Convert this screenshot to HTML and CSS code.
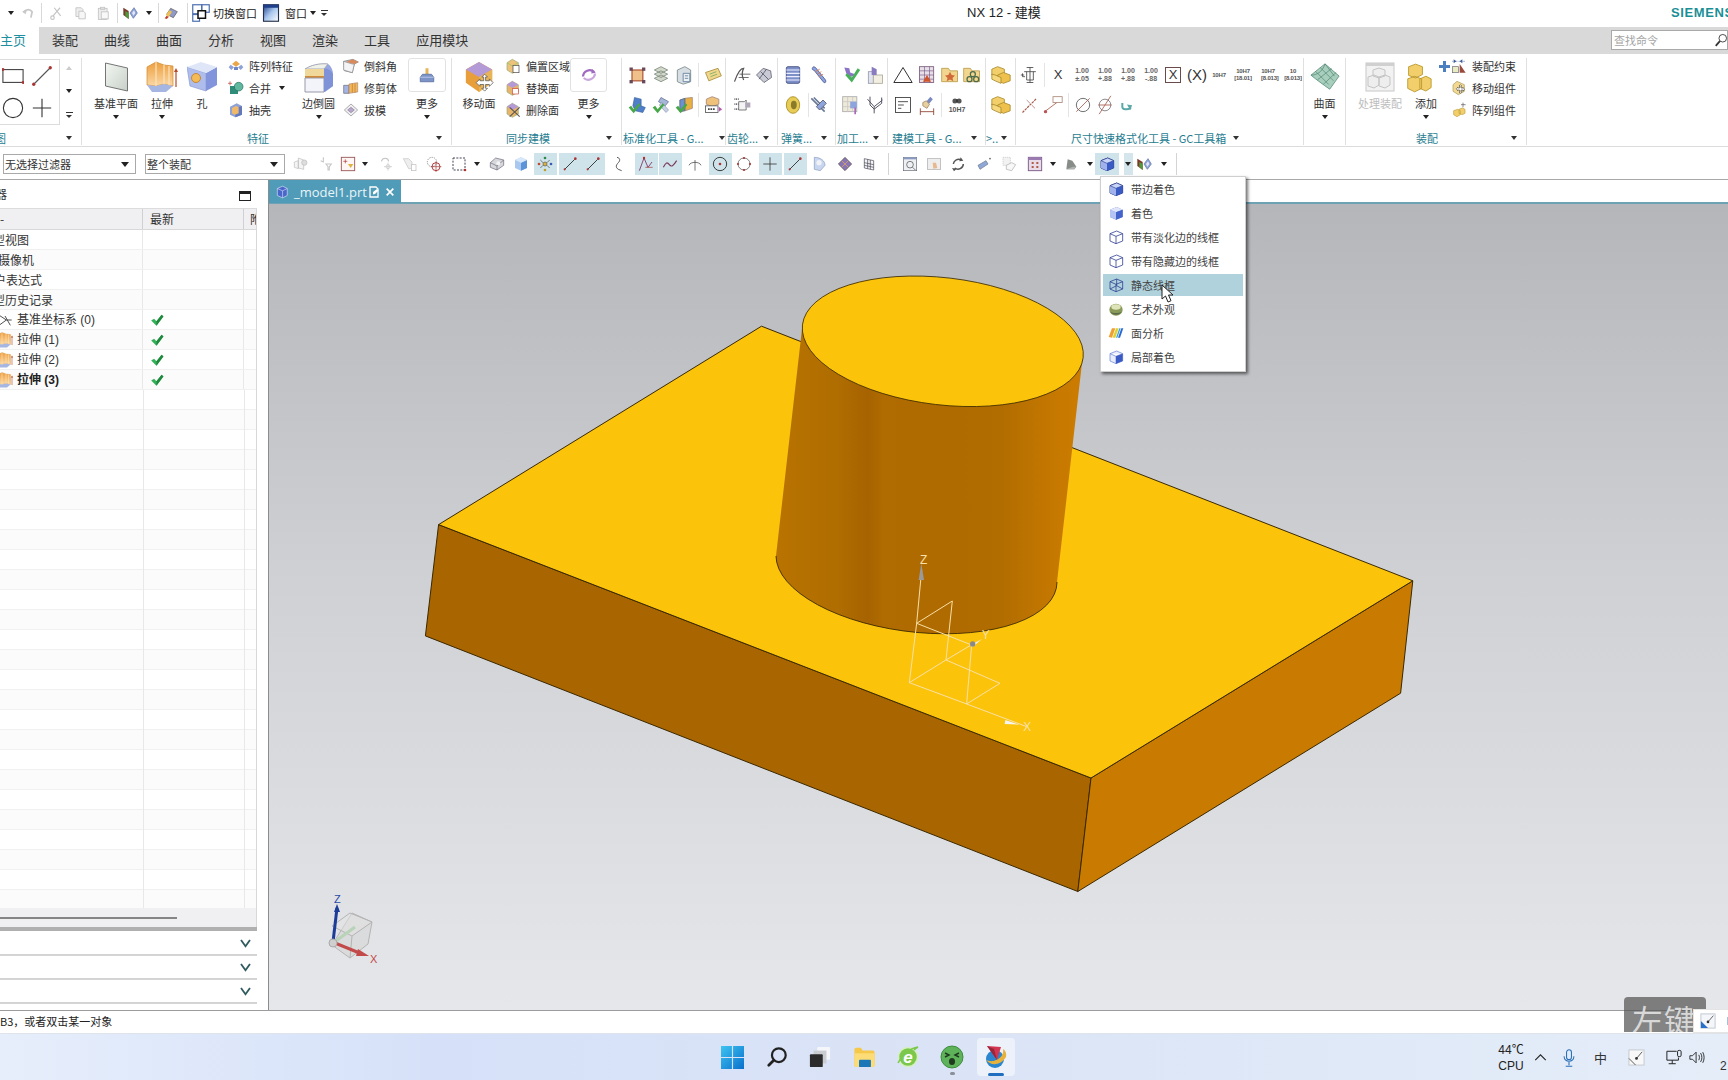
FILE: index.html
```html
<!DOCTYPE html>
<html lang="zh">
<head>
<meta charset="utf-8">
<title>NX 12 - 建模</title>
<link rel="stylesheet" href="styles.css">
</head>
<body>
<svg class="defs" width="0" height="0">
<defs>
<linearGradient id="gPlane" x1="0" y1="0" x2="1" y2="1"><stop offset="0" stop-color="#f4f7f3"/><stop offset="1" stop-color="#c6d0c8"/></linearGradient>
<linearGradient id="gExt" x1="0" y1="0" x2="0" y2="1"><stop offset="0" stop-color="#ed9e3e"/><stop offset="1" stop-color="#fbd8a4"/></linearGradient>
<linearGradient id="gWin" x1="0" y1="0" x2="1" y2="1"><stop offset="0" stop-color="#1f3f8a"/><stop offset=".5" stop-color="#a9c7ee"/><stop offset="1" stop-color="#ffffff"/></linearGradient>
<linearGradient id="gLogo" x1="0" y1="0" x2="1" y2="1"><stop offset="0" stop-color="#3cc4f2"/><stop offset="1" stop-color="#0b6fcb"/></linearGradient>
<symbol id="undo" viewBox="0 0 24 24"><path d="M5 12c1-6 10-8 14-2l-2 10" fill="none" stroke="#c8c8c8" stroke-width="3"/><path d="M2 9l6 5 2-7z" fill="#c8c8c8"/></symbol>
<symbol id="cut" viewBox="0 0 24 24"><path d="M19 3L7 17M9 3l11 14" stroke="#c4c4c4" stroke-width="2" fill="none"/><circle cx="6" cy="20" r="3" fill="none" stroke="#c4c4c4" stroke-width="2"/></symbol>
<symbol id="copy" viewBox="0 0 24 24"><path d="M5 3h9l3 3v12H5z" fill="#eee" stroke="#c4c4c4" stroke-width="1.5"/><path d="M10 9h8l3 3v10H10z" fill="#f6f6f6" stroke="#c4c4c4" stroke-width="1.5"/></symbol>
<symbol id="paste" viewBox="0 0 24 24"><rect x="4" y="4" width="15" height="19" fill="#eee" stroke="#c4c4c4" stroke-width="1.5"/><rect x="8" y="2" width="7" height="4" fill="#ddd" stroke="#bbb"/><rect x="9" y="10" width="12" height="12" fill="#f8f8f8" stroke="#c4c4c4" stroke-width="1.5"/></symbol>
<symbol id="view" viewBox="0 0 24 24"><path d="M2 4l8 5v12l-8-6z" fill="#7b3b2a"/><path d="M5 9l5 3v9l-5-5z" fill="#4f9b3c"/><path d="M12 12l6-8 5 8-6 8z" fill="#8ea4d8" stroke="#5a6ea8"/><path d="M15 12l3-4 2 4-3 4z" fill="#e4e8f6"/></symbol>
<symbol id="brush" viewBox="0 0 24 24"><path d="M10 5l10 5-6 9-10-5z" fill="#8f9ac8" stroke="#555"/><path d="M3 15l5-7 4 2-5 8z" fill="#f0c050"/><path d="M1 20l3-4 3 2-3 3z" fill="#c03a2a"/></symbol>
<symbol id="sw" viewBox="0 0 24 24"><rect x="1" y="1" width="12" height="12" fill="none" stroke="#4d6fb0" stroke-width="1.6"/><rect x="13" y="1" width="10" height="10" fill="none" stroke="#4d6fb0" stroke-width="1.6"/><rect x="1" y="14" width="9" height="9" fill="none" stroke="#4d6fb0" stroke-width="1.6"/><rect x="8" y="9" width="10" height="10" fill="#fff" stroke="#111" stroke-width="2"/></symbol>
<symbol id="win" viewBox="0 0 24 24"><rect x="2" y="1" width="20" height="22" fill="url(#gWin)" stroke="#24304a" stroke-width="1.5"/><rect x="2" y="1" width="20" height="4" fill="#1f3f8a"/></symbol>
<symbol id="rect" viewBox="0 0 24 24"><rect x="1" y="5" width="22" height="14" fill="none" stroke="#444" stroke-width="1.2"/><circle cx="1" cy="5" r="1.6" fill="#a33"/><circle cx="23" cy="19" r="1.6" fill="#a33"/></symbol>
<symbol id="line" viewBox="0 0 24 24"><path d="M3 21L21 3" stroke="#555" stroke-width="1.2"/><circle cx="3" cy="21" r="1.8" fill="#a33"/><circle cx="21" cy="3" r="1.8" fill="#a33"/></symbol>
<symbol id="circ" viewBox="0 0 24 24"><circle cx="12" cy="12" r="10.5" fill="none" stroke="#333" stroke-width="1.2"/></symbol>
<symbol id="plus" viewBox="0 0 24 24"><path d="M12 2v20M2 12h20" stroke="#333" stroke-width="1.2"/></symbol>
<symbol id="plane" viewBox="0 0 24 30"><path d="M1 1l22 5v23L1 24z" fill="url(#gPlane)" stroke="#666" stroke-width=".9"/></symbol>
<symbol id="ext" viewBox="0 0 32 32"><path d="M1 6l9-5 8 3 9 1v20l-9-2-8 2-9-1z" fill="url(#gExt)" stroke="#cf8a30" stroke-width=".7"/><path d="M10 1v24M18 4v20M23 5v20" stroke="#fbe3bd" stroke-width="1.2"/><path d="M1 24l9 1 8-2 9 2-7 6H6z" fill="#a6b6e2"/><path d="M30 26V9" stroke="#b34a2a" stroke-width="1.2"/><path d="M28 11l2-4 2 4z" fill="#b34a2a"/></symbol>
<symbol id="hole" viewBox="0 0 30 30"><path d="M0 5l19 6v18L3 24z" fill="#aebdeb" stroke="#8a9cd4" stroke-width=".7"/><path d="M19 11l11-6v18l-11 6z" fill="#8294dc"/><path d="M0 5l14-5 16 5-11 6z" fill="#dfe6f8"/><circle cx="9" cy="16" r="4.500" fill="#f2bb55" stroke="#c3791f" stroke-width=".8"/></symbol>
<symbol id="round" viewBox="0 0 30 32"><path d="M1 8c6-4 15-6 23-5 3 2 5 6 5 10v12l-8 6H1z" fill="#95a6e0"/><path d="M1 8c6-4 15-6 23-5l-4 5H1z" fill="#eef2e8" stroke="#aab"/><path d="M1 8h19v7H1z" fill="#f0d79a"/><path d="M1 15h19v2H1z" fill="#d08a35"/><path d="M1 17h19v14H1z" fill="#f2f4fa" stroke="#99a"/><path d="M20 8c3-1 7 1 9 5v12l-9 6z" fill="#7f92d8"/></symbol>
<symbol id="more" viewBox="0 0 24 24"><rect x="10" y="3" width="4" height="8" fill="#e8b45a"/><path d="M6 11h12l3 4v6H3v-6z" fill="#7c94c8" stroke="#54689a"/><path d="M3 15h18" stroke="#c9d5ee"/></symbol>
<symbol id="more2" viewBox="0 0 24 24"><path d="M4 14a9 9 0 0 1 15-6" fill="none" stroke="#a06ac0" stroke-width="3"/><path d="M20 10a9 9 0 0 1-15 6" fill="none" stroke="#c9a6dc" stroke-width="3"/><path d="M16 4l5 5-6 1z" fill="#a06ac0"/></symbol>
<symbol id="pat" viewBox="0 0 24 24"><path d="M12 4l6 5-6 4-6-4z" fill="#e9a64a"/><path d="M4 10l5 4-4 4-4-4zM20 10l-5 4 4 4 4-4z" fill="#8ea2d6"/><path d="M9 14l3-1 3 1v4H9z" fill="#6f86c6"/></symbol>
<symbol id="unite" viewBox="0 0 24 24"><rect x="3" y="9" width="12" height="12" fill="#2f8c78"/><circle cx="16" cy="10" r="6.5" fill="#61b89f" stroke="#1f6c5a"/><path d="M3 2v6M0 5h6" stroke="#c03a2a"/></symbol>
<symbol id="shell" viewBox="0 0 24 24"><path d="M3 7l10-5 8 4v13l-10 4-8-4z" fill="#8ea2d6"/><path d="M11 9l10-3v13l-10 4z" fill="#6478bc"/><path d="M6 9l6-3 4 2v9l-6 2-4-2z" fill="#f0b96a"/></symbol>
<symbol id="cham" viewBox="0 0 24 24"><path d="M1 5l14-3 8 4-6 3-3 13-12-3z" fill="#c8c8d8" stroke="#777"/><path d="M1 5l13 4 3 0-3 13L1 18z" fill="#f4f4f6" stroke="#888"/><path d="M14 2l9 4-6 3-12-3z" fill="#d98a5a"/></symbol>
<symbol id="trim" viewBox="0 0 24 24"><path d="M1 8h8v12H1z" fill="#a5b4e2" stroke="#667"/><path d="M9 6l13-2v14L9 20z" fill="#f2b75a" stroke="#a87"/><path d="M14 5v14M18 5v14" stroke="#c07a30"/></symbol>
<symbol id="draft" viewBox="0 0 24 24"><path d="M12 3l10 9-10 9-10-9z" fill="#f0eef4" stroke="#888"/><path d="M12 8l5 4-5 4-5-4z" fill="#b9a7d0" stroke="#888"/></symbol>
<symbol id="move" viewBox="0 0 32 34"><path d="M16 1l14 8v14l-14 10L2 23V9z" fill="#e89e3a"/><path d="M16 1l14 8-14 8L2 9z" fill="#b59ad8"/><path d="M16 17l14-8v14l-14 10z" fill="#e9b458"/><path d="M22 14l3 3h-2v4h4v-2l4 4-4 4v-2h-4v4h2l-3 3-3-3h2v-4h-4v2l-4-4 4-4v2h4v-4h-2z" fill="#fff" stroke="#555" stroke-width=".8"/></symbol>
<symbol id="offs" viewBox="0 0 24 24"><path d="M11 2l9 5v11l-9 5-8-5V7z" fill="#eec27a" stroke="#9a7"/><path d="M3 7l8 5 9-5" fill="none" stroke="#8c6"/><rect x="12" y="11" width="9" height="11" fill="#fff" stroke="#444"/></symbol>
<symbol id="repl" viewBox="0 0 24 24"><path d="M11 2l9 5v11l-9 5-8-5V7z" fill="#e7b56a" stroke="#9a7"/><path d="M3 7l8-5 9 5-9 5z" fill="#b59ad8"/><rect x="11" y="13" width="9" height="8" fill="#fff" stroke="#c43"/></symbol>
<symbol id="del" viewBox="0 0 24 24"><path d="M11 2l9 5v11l-9 5-8-5V7z" fill="#e7b56a" stroke="#9a7"/><path d="M3 7l8-5 9 5-9 5z" fill="#b59ad8"/><path d="M7 8l15 14M22 8L7 22" stroke="#555" stroke-width="1.6"/></symbol>
<symbol id="a1" viewBox="0 0 24 24"><rect x="6" y="6" width="13" height="13" fill="#f0c08a" stroke="#b05a3a" stroke-width="1.5"/><rect x="3" y="3" width="4" height="4" fill="#6a4a5a"/><rect x="18" y="3" width="4" height="4" fill="#6a4a5a"/><rect x="3" y="18" width="4" height="4" fill="#6a4a5a"/><rect x="18" y="18" width="4" height="4" fill="#6a4a5a"/></symbol>
<symbol id="a2" viewBox="0 0 24 24"><path d="M12 2l8 4-8 4-8-4zM12 7l8 4-8 4-8-4zM12 12l8 4-8 4-8-4z" fill="#d4d8cc" stroke="#7a8a7a"/></symbol>
<symbol id="a3" viewBox="0 0 24 24"><path d="M4 6l9-4 7 4v14l-9 3-7-3z" fill="#d8dfe4" stroke="#788"/><path d="M11 10h8v10h-8z" fill="#eef2f4" stroke="#5a7a9a"/><path d="M13 13h4M13 16h4" stroke="#5a7a9a"/></symbol>
<symbol id="a4" viewBox="0 0 24 24"><path d="M3 9l15-5 4 9-15 6z" fill="#f0d78a" stroke="#a88a3a"/><path d="M8 11l8-3M9 14l8-3" stroke="#7a6"/></symbol>
<symbol id="b1" viewBox="0 0 24 24"><path d="M9 3l8 2v8l5 2-3 6-9-2-3-6z" fill="#4f7fc8" stroke="#2f5a9a" stroke-width=".7"/><path d="M2 15l3-2 3 4 6-7 2 2-8 10z" fill="#48a848"/></symbol>
<symbol id="b2" viewBox="0 0 24 24"><path d="M12 3l9 5-4 5-8-5z" fill="#a6b6d8" stroke="#6a7a9a"/><path d="M13 9l8 9-3 3-8-9z" fill="#c8d0e4" stroke="#6a7a9a" stroke-width=".6"/><path d="M2 15l3-2 3 4 6-7 2 2-8 10z" fill="#48a848"/></symbol>
<symbol id="b3" viewBox="0 0 24 24"><path d="M13 4l9-1v13l-9 3z" fill="#e7b040" stroke="#a87"/><path d="M7 6l6-2v15l-6 1z" fill="#6f90d0" stroke="#567"/><path d="M2 15l3-2 3 4 6-7 2 2-8 10z" fill="#48a848"/></symbol>
<symbol id="b4" viewBox="0 0 24 24"><path d="M4 5l7-3 8 3v6l-8 3-7-3z" fill="#eec27a" stroke="#a87"/><rect x="3" y="13" width="15" height="8" fill="#fff" stroke="#555"/><path d="M6 17h9" stroke="#444" stroke-dasharray="2 1" stroke-width="2"/><path d="M19 14l4 3-4 3z" fill="#b05ab0"/></symbol>
<symbol id="g1" viewBox="0 0 24 24"><path d="M3 20c4-12 8-16 11-16-2 4-2 10 0 14" fill="none" stroke="#555" stroke-width="1.5"/><path d="M9 11h13M8 15h12" stroke="#555"/></symbol>
<symbol id="g2" viewBox="0 0 24 24"><path d="M3 12l8-8 9 3 1 8-9 6z" fill="#c8cad4" stroke="#667"/><path d="M8 8l9 9M15 5L6 17" stroke="#556"/></symbol>
<symbol id="g3" viewBox="0 0 24 24"><path d="M3 5h5M3 11h5M3 17h5" stroke="#555" stroke-dasharray="1 1" stroke-width="2"/><path d="M8 8h7l2-2v12h-9z" fill="#f4f4f4" stroke="#666"/><rect x="16" y="9" width="6" height="6" fill="#b0a8b8"/></symbol>
<symbol id="sp1" viewBox="0 0 24 24"><rect x="4" y="2" width="16" height="20" rx="2" fill="#7d8fc8" stroke="#3c4a7a"/><path d="M4 6h16M4 10h16M4 14h16M4 18h16" stroke="#eef" stroke-width="1.4"/></symbol>
<symbol id="sp2" viewBox="0 0 24 24"><path d="M7 2c-3 1-2 5 0 4l12 15c2 1 3-1 2-3L9 3z" fill="#8ea4dc" stroke="#4a5a98"/><path d="M9 8l5-3M11 11l5-3M13 14l5-3" stroke="#d5764a"/></symbol>
<symbol id="sp3" viewBox="0 0 24 24"><ellipse cx="12" cy="12" rx="8" ry="10" fill="#e7cc55" stroke="#a88a1a"/><ellipse cx="13" cy="12" rx="3.5" ry="5" fill="#8a7a2a"/></symbol>
<symbol id="sp4" viewBox="0 0 24 24"><path d="M4 4l16 16M7 3l13 13" stroke="#6a7a98" stroke-width="2"/><path d="M10 14l8-8 4 4-8 8z" fill="#8ea4dc" stroke="#556"/></symbol>
<symbol id="m1" viewBox="0 0 24 24"><path d="M4 3l6 1 1 5 6 2-4 3-6-2z" fill="#8b74c8"/><path d="M5 12l3-2 5 5L20 4l3 2-10 15z" fill="#48b058"/></symbol>
<symbol id="m2" viewBox="0 0 24 24"><rect x="4" y="8" width="6" height="14" fill="#e0e4f0" stroke="#99a"/><rect x="10" y="12" width="11" height="10" fill="#f2eee2" stroke="#aa9"/><path d="M8 2l6 3v7H8z" fill="#8a7ac0"/></symbol>
<symbol id="m3" viewBox="0 0 24 24"><rect x="2" y="2" width="17" height="18" fill="#eee9d8" stroke="#aaa"/><path d="M2 8h17M2 14h17M8 2v18M14 2v18" stroke="#c8c8c8"/><rect x="11" y="8" width="8" height="8" fill="#8ea4dc"/><path d="M17 15v8" stroke="#a86ab8" stroke-width="2"/></symbol>
<symbol id="m4" viewBox="0 0 24 24"><path d="M3 5l8 9 0 8M11 14l10-8M6 2v10l5 5 9-7V3" fill="none" stroke="#556" stroke-width="1.2"/></symbol>
<symbol id="t1" viewBox="0 0 24 24"><path d="M12 3l11 18H1z" fill="none" stroke="#333" stroke-width="1.2"/></symbol>
<symbol id="t2" viewBox="0 0 24 24"><rect x="3" y="2" width="17" height="19" fill="#e8e0e8" stroke="#7a5a7a"/><path d="M3 7h17M3 12h17M3 17h17M9 2v19M15 2v19" stroke="#7a5a8a" stroke-width=".8"/><path d="M12 12l5 8H7z" fill="#d0552a"/></symbol>
<symbol id="t3" viewBox="0 0 24 24"><path d="M2 4h8l2 3h9v13H2z" fill="#f2d690" stroke="#b89a4a"/><path d="M12 8l2 4 4 .5-3 3 1 4-4-2-4 2 1-4-3-3 4-.5z" fill="#d06a3a"/></symbol>
<symbol id="t4" viewBox="0 0 24 24"><path d="M2 4h8l2 3h9v13H2z" fill="#f2d690" stroke="#b89a4a"/><circle cx="13" cy="11" r="3" fill="none" stroke="#4a6a4a" stroke-width="1.5"/><circle cx="9" cy="17" r="3" fill="none" stroke="#4a6a4a" stroke-width="1.5"/><circle cx="17" cy="17" r="3" fill="none" stroke="#4a6a4a" stroke-width="1.5"/></symbol>
<symbol id="t5" viewBox="0 0 24 24"><rect x="3" y="3" width="18" height="18" fill="none" stroke="#333"/><path d="M6 8h12M6 12h7M6 16h4" stroke="#333"/></symbol>
<symbol id="t6" viewBox="0 0 24 24"><path d="M4 20h16M4 16v8M20 16v8" stroke="#8a3a2a"/><path d="M16 2l3 3-5 6-3-3z" fill="#7a8ac0"/><path d="M7 9l4-2 4 4-3 5-5-3z" fill="#e6d0a0" stroke="#a86"/></symbol>
<symbol id="t7" viewBox="0 0 24 24"><circle cx="7" cy="12" r="6" fill="#555"/><circle cx="17" cy="12" r="6" fill="#555"/><rect x="10" y="8" width="4" height="6" fill="#333"/></symbol>
<symbol id="box" viewBox="0 0 24 24"><path d="M8 2l8 3v7l-8 3-7-3V5z" fill="#f2cf6a" stroke="#a8892a"/><path d="M15 9l8 3v7l-8 3-7-3v-7z" fill="#eec04e" stroke="#a8892a"/><path d="M5 12l7 3v7l-7-3-4-2v-6z" fill="#f6d97e" stroke="#a8892a"/></symbol>
<symbol id="d1" viewBox="0 0 24 24"><path d="M5 8h14M8 3h8M8 21h8M12 3v18M3 10v4h3M8 8v10h8V8" fill="none" stroke="#444"/><path d="M1 12h4" stroke="#444"/></symbol>
<symbol id="d2" viewBox="0 0 24 24"><path d="M3 21L20 4" stroke="#a85a4a" stroke-dasharray="3 1" stroke-width="1.4"/><path d="M8 6l4 4M14 12l4 4" stroke="#b07a7a"/></symbol>
<symbol id="d3" viewBox="0 0 24 24"><path d="M2 20L22 5" stroke="#a85a4a"/><rect x="12" y="2" width="11" height="7" fill="#fff" stroke="#a87"/><circle cx="3" cy="20" r="2" fill="#b55"/></symbol>
<symbol id="d4" viewBox="0 0 24 24"><circle cx="12" cy="12" r="8" fill="none" stroke="#555"/><path d="M20 4L4 20" stroke="#a85a4a"/></symbol>
<symbol id="d5" viewBox="0 0 24 24"><circle cx="12" cy="12" r="7" fill="none" stroke="#777"/><path d="M19 1L5 23M4 12h16" stroke="#a85a4a"/></symbol>
<symbol id="d6" viewBox="0 0 24 24"><path d="M5 9v6c0 4 8 5 13 1" fill="none" stroke="#5aa8a8" stroke-width="3"/><path d="M14 9l6 5-6 5z" fill="#5aa8a8" transform="rotate(-30 17 14)"/></symbol>
<symbol id="surf" viewBox="0 0 32 32"><path d="M1 14L16 2l15 13-10 14C14 24 7 19 1 14z" fill="#a8cfbd" stroke="#6a9a88"/><path d="M6 10l14 14M11 6l14 14M16 2l10 13M1 14c6 0 12-3 15-12M8 19l15-12M14 24L28 11" fill="none" stroke="#5a8a7a" stroke-width=".8"/></symbol>
<symbol id="asm" viewBox="0 0 30 30"><rect x="1" y="1" width="28" height="28" fill="#f2f2f2" stroke="#c8c8c8"/><rect x="1" y="1" width="28" height="3" fill="#d0d0d0"/><path d="M8 8l6-2 6 2v6l-6 2-6-2z M14 15l6-2 5 2v8l-5 3-6-2z M3 15l6-2 5 2v8l-5 3-6-2z" fill="#eeeeee" stroke="#c4c4c4"/></symbol>
<symbol id="add" viewBox="0 0 30 36"><path d="M3 5l8-3 8 3v9l-8 4-8-3z M2 19l8-3 8 3v11l-8 4-8-4z M16 19l7-3 6 3v10l-6 4-7-3z" fill="#f2cf6a" stroke="#b8962a"/></symbol>
<symbol id="con" viewBox="0 0 24 24"><rect x="2" y="13" width="9" height="9" fill="#e8ecc0" stroke="#667"/><path d="M13 9l9 13h-9z" fill="#9a4a3a"/><path d="M4 2l4 3-4 3zM17 2l-4 3 4 3z" fill="#3d5c96"/><path d="M2 5h20" stroke="#3d5c96" stroke-dasharray="1 1"/></symbol>
<symbol id="mvc" viewBox="0 0 24 24"><path d="M9 2l11 5v10l-9 5-8-5V7z" fill="#f2d890" stroke="#a89a5a"/><path d="M14 7l2 2h-1v3h3v-1l2 3-2 3v-2h-3v3h1l-2 2-2-2h1v-3H10v1l-2-3 2-2v1h3V9h-1z" fill="#fff" stroke="#333" stroke-width=".8"/></symbol>
<symbol id="arr" viewBox="0 0 24 24"><path d="M4 13l6-2 4 2v6l-5 3-5-3z M12 11l5-2 4 2v6l-4 2-5-2z" fill="#f2cf6a" stroke="#c0a040"/><path d="M18 1v7M15 4h7" stroke="#555"/></symbol>
<symbol id="mag" viewBox="0 0 24 24"><circle cx="15" cy="9" r="6.5" fill="none" stroke="#333" stroke-width="1.5"/><path d="M10 14l-7 8" stroke="#333" stroke-width="3"/></symbol>
<symbol id="s1" viewBox="0 0 24 24"><path d="M8 3l8 3v14l-8-2zM2 9l6-2v12l-6-2z" fill="#f4f4f4" stroke="#bbb"/><circle cx="17" cy="10" r="4" fill="#ddd" stroke="#bbb"/></symbol>
<symbol id="s2" viewBox="0 0 24 24"><path d="M8 2v7l-4-2M12 12l8 0-3 4v5h-2v-5z" fill="none" stroke="#c6c6c6" stroke-width="1.6"/></symbol>
<symbol id="s3" viewBox="0 0 24 24"><rect x="2" y="2" width="20" height="20" fill="#fdf6f4" stroke="#9a5a5a" stroke-width="1.4"/><path d="M8 5v6M5 8h6" stroke="#a33"/><path d="M12 12h8l-4 6z" fill="#e0b040"/></symbol>
<symbol id="s4" viewBox="0 0 24 24"><path d="M5 8c2-6 10-6 11 0" fill="none" stroke="#c4c4c4" stroke-width="1.6"/><path d="M15 10v12M9 16h12" stroke="#c4c4c4"/><circle cx="15" cy="16" r="3" fill="none" stroke="#c4c4c4"/></symbol>
<symbol id="s5" viewBox="0 0 24 24"><path d="M2 4h8l5 5v10h-5z" fill="#eee" stroke="#c4c4c4"/><rect x="14" y="13" width="7" height="9" fill="#fff" stroke="#bbb"/></symbol>
<symbol id="s6" viewBox="0 0 24 24"><circle cx="9" cy="9" r="7" fill="none" stroke="#666" stroke-dasharray="2 1.5"/><circle cx="15" cy="16" r="6" fill="none" stroke="#a33" stroke-width="1.4"/><path d="M15 8v16M7 16h16" stroke="#a33"/></symbol>
<symbol id="s7" viewBox="0 0 24 24"><rect x="3" y="3" width="18" height="18" fill="none" stroke="#445" stroke-width="1.5" stroke-dasharray="3 2"/><circle cx="21" cy="21" r="2" fill="#a33"/></symbol>
<symbol id="s8" viewBox="0 0 24 24"><path d="M2 10l8-7 12 3v8l-10 7-10-4z" fill="#d8d8dc" stroke="#667"/><path d="M2 10l10 5 10-9M12 15v6" fill="none" stroke="#667"/><circle cx="14" cy="11" r="3" fill="#f4f4f4"/></symbol>
<symbol id="s9" viewBox="0 0 24 24"><path d="M12 2l9 4v12l-9 4-9-4V6z" fill="#a9c8ef"/><path d="M12 10l9-4v12l-9 4z" fill="#5d94d8"/><path d="M3 6l9-4 9 4-9 4z" fill="#d8e8fb"/></symbol>
<symbol id="s10" viewBox="0 0 24 24"><circle cx="12" cy="12" r="3" fill="#e0b040" stroke="#555"/><circle cx="12" cy="3" r="2" fill="#2a8a4a"/><circle cx="21" cy="12" r="2" fill="#3a5ab8"/><circle cx="12" cy="21" r="2" fill="#b8a030"/><circle cx="3" cy="12" r="2" fill="#c04a2a"/><path d="M5 6l4 4M19 6l-4 4M5 18l4-4M19 18l-4-4" stroke="#444"/></symbol>
<symbol id="s11" viewBox="0 0 24 24"><path d="M3 21L19 5" stroke="#333" stroke-width="1.4"/><circle cx="20" cy="4" r="2" fill="#a33"/><circle cx="4" cy="20" r="1.6" fill="#a33"/></symbol>
<symbol id="s12" viewBox="0 0 24 24"><path d="M9 2c5 1 5 5 2 8s-5 7 0 10l5 2" fill="none" stroke="#333" stroke-width="1.2"/></symbol>
<symbol id="s13" viewBox="0 0 24 24"><path d="M2 22L9 3l6 14 6-8" fill="none" stroke="#8a4a7a" stroke-width="1.5"/><circle cx="9" cy="3" r="1.8" fill="#a33"/><path d="M11 17l11 0" stroke="#a33"/></symbol>
<symbol id="s14" viewBox="0 0 24 24"><path d="M2 17c4-8 6-8 9-4s6 2 11-6" fill="none" stroke="#7a3a5a" stroke-width="1.7"/></symbol>
<symbol id="s15" viewBox="0 0 24 24"><path d="M12 22V6M3 14c2-6 16-6 18 0" fill="none" stroke="#333"/></symbol>
<symbol id="s16" viewBox="0 0 24 24"><circle cx="12" cy="12" r="10" fill="none" stroke="#222" stroke-width="1.3"/><circle cx="12" cy="12" r="2" fill="#a33"/></symbol>
<symbol id="s17" viewBox="0 0 24 24"><circle cx="12" cy="12" r="9" fill="none" stroke="#444"/><circle cx="12" cy="3" r="1.6" fill="#a33"/><circle cx="21" cy="12" r="1.6" fill="#a33"/><circle cx="12" cy="21" r="1.6" fill="#a33"/><circle cx="3" cy="12" r="1.6" fill="#a33"/></symbol>
<symbol id="s18" viewBox="0 0 24 24"><path d="M5 2c9 0 16 5 16 12l-7 8-9-2z" fill="#c8d6f0" stroke="#8a9ac0"/><circle cx="12" cy="10" r="4" fill="#f0f2f8"/></symbol>
<symbol id="s19" viewBox="0 0 24 24"><path d="M12 2l10 10-10 10L2 12z" fill="#8a74b8" stroke="#553"/><path d="M7 7l10 10M17 7L7 17" stroke="#e8b050"/></symbol>
<symbol id="s20" viewBox="0 0 24 24"><path d="M5 4l14 3v14L5 18z" fill="#f4f4f4" stroke="#445"/><path d="M5 10l14 3M5 14l14 3M10 5v14M14 6v14" stroke="#445"/></symbol>
<symbol id="s21" viewBox="0 0 24 24"><rect x="2" y="2" width="20" height="20" fill="#eef0f4" stroke="#667"/><rect x="2" y="2" width="20" height="3" fill="#8a9ac0"/><circle cx="12" cy="13" r="5" fill="none" stroke="#444"/><path d="M16 17l4 4" stroke="#444"/></symbol>
<symbol id="s22" viewBox="0 0 24 24"><rect x="2" y="4" width="20" height="16" fill="#eee" stroke="#aaa"/><path d="M10 10l5 0 2 8-6 1z" fill="#e8b890"/></symbol>
<symbol id="s23" viewBox="0 0 24 24"><path d="M5 12a8 8 0 0 1 12-6M20 12a8 8 0 0 1-13 6" fill="none" stroke="#555" stroke-width="2.2"/><path d="M16 2l4 5-6 1zM3 18l7 1-4 4z" fill="#555"/></symbol>
<symbol id="s24" viewBox="0 0 24 24"><path d="M3 14l12-7 3 5-12 8z" fill="#90a8d8" stroke="#678"/><circle cx="21" cy="4" r="1.2" fill="#555"/></symbol>
<symbol id="s25" viewBox="0 0 24 24"><rect x="3" y="2" width="11" height="12" fill="#f2f2f2" stroke="#c4c4c4" stroke-dasharray="2 1"/><path d="M8 14l8-4 6 3-6 9-8-2z" fill="#f8f8f8" stroke="#aaa"/></symbol>
<symbol id="s26" viewBox="0 0 24 24"><rect x="2" y="2" width="20" height="20" fill="#e9dce9" stroke="#7a5a8a" stroke-width="1.4"/><rect x="2" y="2" width="20" height="4" fill="#9a7ab0"/><rect x="7" y="9" width="3" height="3" fill="#b05a4a"/><rect x="14" y="9" width="3" height="3" fill="#b05a4a"/><rect x="7" y="15" width="3" height="3" fill="#b05a4a"/><rect x="14" y="15" width="3" height="3" fill="#b05a4a"/></symbol>
<symbol id="s27" viewBox="0 0 24 24"><path d="M5 20l2-15 7 2 6 9-3 4z" fill="#888c88"/><path d="M5 20l10-4 5 0-3 4z" fill="#b0b4b0"/></symbol>
<symbol id="cube" viewBox="0 0 24 24"><path d="M3 7l10-4 9 4v11l-10 4-9-4z" fill="#5f78d0" stroke="#1e2f80" stroke-width="1.3"/><path d="M3 7l9 4v11l-9-4z" fill="#9fb2ec"/><path d="M3 7l10-4 9 4-10 4z" fill="#c9d5f8" stroke="#1e2f80" stroke-width=".8"/><path d="M12 11l10-4v11l-10 4z" fill="#3a5ac4"/></symbol>
<symbol id="cube2" viewBox="0 0 24 24"><path d="M3 7l10-4 9 4v11l-10 4-9-4z" fill="#5f78d0"/><path d="M3 7l9 4v11l-9-4z" fill="#b4c4f4"/><path d="M3 7l10-4 9 4-10 4z" fill="#dfe6fb"/><path d="M12 11l10-4v11l-10 4z" fill="#4464cc"/></symbol>
<symbol id="wire" viewBox="0 0 24 24"><path d="M3 7l10-4 9 4v11l-10 4-9-4zM3 7l9 4 10-4M12 11v11" fill="#fff" stroke="#2f3f90" stroke-width="1.2"/></symbol>
<symbol id="wire2" viewBox="0 0 24 24"><path d="M3 7l10-4 9 4v11l-10 4-9-4zM3 7l9 4 10-4M12 11v11M13 3v10M3 18l10-5 9 5" fill="none" stroke="#2f3f90" stroke-width="1.2"/></symbol>
<symbol id="ball" viewBox="0 0 24 24"><ellipse cx="12" cy="13" rx="10" ry="9" fill="#8a9a5a"/><ellipse cx="12" cy="9" rx="7" ry="4" fill="#dfe4b8"/><path d="M3 16c5 6 13 6 18 0-4 2-13 3-18 0z" fill="#5a6a4a"/></symbol>
<symbol id="stripes" viewBox="0 0 24 24"><path d="M1 18L6 5h5L6 19z" fill="#f0a030"/><path d="M7 19l5-14h4l-5 14z" fill="#e0d030"/><path d="M12 19l5-14h2l-5 14z" fill="#38a0d8"/><path d="M15 19l5-14h3l-5 14z" fill="#2a6ad0"/></symbol>
<symbol id="partial" viewBox="0 0 24 24"><path d="M3 7l10-4 9 4v11l-10 4-9-4zM3 7l9 4 10-4M12 11v11" fill="#e8edfb" stroke="#5f78d0" stroke-width="1"/><path d="M12 11l10-4v11l-10 4z" fill="#3a5ac4"/></symbol>
<symbol id="chk" viewBox="0 0 24 24"><path d="M2 13l5-3 4 4L20 3l3 3L11 22z" fill="#35b05a"/><path d="M11 14L20 3l3 3L11 22z" fill="#1f8a3e"/></symbol>
<symbol id="datum" viewBox="0 0 24 24"><path d="M14 12L2 4M14 12L3 20M14 12l8 0M12 6l8 14" stroke="#444" stroke-width="1.4" fill="none"/></symbol>
<symbol id="chev" viewBox="0 0 12 10"><path d="M1 1l5 7 5-7" fill="none" stroke="#2f5a5f" stroke-width="2"/></symbol>
<symbol id="ftab" viewBox="0 0 24 24"><path d="M4 6l9-4 8 4v12l-8 4-9-4z" fill="#4a66c8" stroke="#eef" stroke-width="1"/><path d="M4 6l9 4 8-4" fill="none" stroke="#dfe8ff"/><path d="M13 10v12" stroke="#dfe8ff"/></symbol>
<symbol id="fpg" viewBox="0 0 24 24"><path d="M4 2h12l4 4v16H4z" fill="none" stroke="#fff" stroke-width="2.6"/><path d="M10 12l8-6 3 3-7 7-4 1z" fill="#fff"/></symbol>
<symbol id="fx" viewBox="0 0 24 24"><path d="M4 4l16 16M20 4L4 20" stroke="#fff" stroke-width="4"/></symbol>
</defs>
</svg>

<header class="titlebar">
  <span class="t w22"><i class="dd"></i></span>
  <span class="t w11"><svg class="i14"><use href="#undo"/></svg></span>
  <i class="tsep ml8"></i>
  <span class="t w28"><svg class="i14"><use href="#cut"/></svg></span>
  <span class="t w20"><svg class="i14"><use href="#copy"/></svg></span>
  <span class="t w25"><svg class="i14"><use href="#paste"/></svg></span>
  <i class="tsep ml2"></i>
  <span class="t w24"><svg class="i16"><use href="#view"/></svg></span>
  <span class="t w14"><i class="dd"></i></span>
  <i class="tsep ml2"></i>
  <span class="t w26"><svg class="i16"><use href="#brush"/></svg></span>
  <i class="tsep ml2"></i>
  <span class="t w25"><svg class="i18"><use href="#sw"/></svg></span>
  <span class="tt">切换窗口</span>
  <span class="t w28"><svg class="i18"><use href="#win"/></svg></span>
  <span class="tt">窗口</span>
  <span class="t w12"><i class="dd"></i></span>
  <span class="t w10"><i class="caret"></i></span>
  <span class="apptitle">NX 12 - 建模</span>
  <span class="grow"></span>
  <span class="siemens">SIEMENS</span>
</header>

<nav class="tabs">
  <span class="tab active">主页</span>
  <span class="tab">装配</span>
  <span class="tab">曲线</span>
  <span class="tab">曲面</span>
  <span class="tab">分析</span>
  <span class="tab">视图</span>
  <span class="tab">渲染</span>
  <span class="tab">工具</span>
  <span class="tab">应用模块</span>
  <span class="grow"></span>
  <span class="search"><span class="ph">查找命令</span><svg class="i14 magi"><use href="#mag"/></svg></span>
</nav>

<section class="ribbon">
  <div class="grp g1">
    <div class="body">
      <div class="skbox">
        <span class="sk"><svg class="i22"><use href="#rect"/></svg></span>
        <span class="sk"><svg class="i22"><use href="#line"/></svg></span>
        <span class="sk"><svg class="i22"><use href="#circ"/></svg></span>
        <span class="sk"><svg class="i22"><use href="#plus"/></svg></span>
      </div>
      <div class="skscroll"><i class="up"></i><i class="dd"></i><i class="caret"></i></div>
    </div>
    <div class="glabel"><span class="gl o5">图</span><span class="grow"></span><i class="dd"></i></div>
  </div>

  <div class="grp g2">
    <div class="body pl12">
      <div class="big w44"><span class="bi"><svg class="i25x30"><use href="#plane"/></svg></span><span>基准平面</span><i class="dd"></i></div>
      <div class="big w48"><span class="bi"><svg class="i32"><use href="#ext"/></svg></span><span>拉伸</span><i class="dd"></i></div>
      <div class="big w32"><span class="bi"><svg class="i30"><use href="#hole"/></svg></span><span>孔</span></div>
      <div class="stack ml10 w68">
        <div class="si"><svg class="i16"><use href="#pat"/></svg><span>阵列特征</span></div>
        <div class="si"><svg class="i16"><use href="#unite"/></svg><span>合并</span><i class="dd ml3"></i></div>
        <div class="si"><svg class="i16"><use href="#shell"/></svg><span>抽壳</span></div>
      </div>
      <div class="big w45"><span class="bi"><svg class="i32"><use href="#round"/></svg></span><span>边倒圆</span><i class="dd"></i></div>
      <div class="stack ml2 w62">
        <div class="si"><svg class="i16"><use href="#cham"/></svg><span>倒斜角</span></div>
        <div class="si"><svg class="i16"><use href="#trim"/></svg><span>修剪体</span></div>
        <div class="si"><svg class="i16"><use href="#draft"/></svg><span>拔模</span></div>
      </div>
      <div class="big w38 ml3"><span class="bi boxed"><svg class="i18"><use href="#more"/></svg></span><span>更多</span><i class="dd"></i></div>
    </div>
    <div class="glabel center"><span class="gl gl-mid">特征</span><i class="dd ddr"></i></div>
  </div>

  <div class="grp g3">
    <div class="body pl10">
      <div class="big w34"><span class="bi"><svg class="i32"><use href="#move"/></svg></span><span>移动面</span></div>
      <div class="stack ml9 w62">
        <div class="si"><svg class="i16"><use href="#offs"/></svg><span>偏置区域</span></div>
        <div class="si"><svg class="i16"><use href="#repl"/></svg><span>替换面</span></div>
        <div class="si"><svg class="i16"><use href="#del"/></svg><span>删除面</span></div>
      </div>
      <div class="big w37 ml3"><span class="bi boxed"><svg class="i18"><use href="#more2"/></svg></span><span>更多</span><i class="dd"></i></div>
    </div>
    <div class="glabel center"><span class="gl gl-s3">同步建模</span><i class="dd ddr"></i></div>
  </div>

  <div class="grp g4">
    <div class="body col">
      <div class="irow"><span class="t w30"><svg class="i20"><use href="#a1"/></svg></span><span class="t w18"><svg class="i20"><use href="#a2"/></svg></span><span class="t w28"><svg class="i20"><use href="#a3"/></svg></span><i class="vsep"></i><span class="t w28"><svg class="i20"><use href="#a4"/></svg></span></div>
      <div class="irow"><span class="t w30"><svg class="i20"><use href="#b1"/></svg></span><span class="t w18"><svg class="i20"><use href="#b2"/></svg></span><span class="t w28"><svg class="i20"><use href="#b3"/></svg></span><i class="vsep"></i><span class="t w28"><svg class="i20"><use href="#b4"/></svg></span></div>
    </div>
    <div class="glabel"><span class="gl">标准化工具 - G...</span><i class="dd ml9"></i></div>
  </div>

  <div class="grp g5">
    <div class="body col">
      <div class="irow"><span class="t w32"><svg class="i20"><use href="#g1"/></svg></span><span class="t w12"><svg class="i20"><use href="#g2"/></svg></span></div>
      <div class="irow"><span class="t w32"><svg class="i20"><use href="#g3"/></svg></span></div>
    </div>
    <div class="glabel"><span class="gl">齿轮...</span><i class="dd ml5"></i></div>
  </div>

  <div class="grp g6">
    <div class="body col">
      <div class="irow"><span class="t w30"><svg class="i20"><use href="#sp1"/></svg></span><span class="t w18 ml1"><svg class="i20"><use href="#sp2"/></svg></span></div>
      <div class="irow"><span class="t w30"><svg class="i20"><use href="#sp3"/></svg></span><i class="vsep"></i><span class="t w18"><svg class="i20"><use href="#sp4"/></svg></span></div>
    </div>
    <div class="glabel pl3"><span class="gl">弹簧...</span><i class="dd ml9"></i></div>
  </div>

  <div class="grp g7">
    <div class="body col">
      <div class="irow"><span class="t w30"><svg class="i20"><use href="#m1"/></svg></span><span class="t w18"><svg class="i20"><use href="#m2"/></svg></span></div>
      <div class="irow"><span class="t w30"><svg class="i20"><use href="#m3"/></svg></span><span class="t w18"><svg class="i20"><use href="#m4"/></svg></span></div>
    </div>
    <div class="glabel"><span class="gl">加工...</span><i class="dd ml5"></i></div>
  </div>

  <div class="grp g8">
    <div class="body col">
      <div class="irow"><span class="t w30"><svg class="i20"><use href="#t1"/></svg></span><span class="t w18"><svg class="i20"><use href="#t2"/></svg></span><span class="t w28"><svg class="i20"><use href="#t3"/></svg></span><span class="t w16"><svg class="i20"><use href="#t4"/></svg></span></div>
      <div class="irow"><span class="t w30"><svg class="i20"><use href="#t5"/></svg></span><span class="t w18"><svg class="i20"><use href="#t6"/></svg></span><i class="vsep ml5"></i><span class="t w30 twoline"><svg class="i12b"><use href="#t7"/></svg><b>10H7</b></span></div>
    </div>
    <div class="glabel pl4"><span class="gl">建模工具 - G...</span><i class="dd ml9"></i></div>
  </div>

  <div class="grp g9">
    <div class="body col">
      <div class="irow"><span class="t w30"><svg class="i20"><use href="#box"/></svg></span></div>
      <div class="irow"><span class="t w30"><svg class="i20"><use href="#box"/></svg></span></div>
    </div>
    <div class="glabel"><span class="gl">&gt;..</span><i class="dd ml3"></i></div>
  </div>

  <div class="grp g10">
    <div class="body col">
      <div class="irow"><span class="t w28"><svg class="i20"><use href="#d1"/></svg></span><i class="vsep"></i><span class="t w26 xt">X</span><span class="t w22 tol"><b>1.00</b><b>±.05</b></span><span class="t w24 tol"><b>1.00</b><b>+.88</b></span><span class="t w22 tol"><b>1.00</b><b>+.88</b></span><span class="t w24 tol"><b>1.00</b><b>-.88</b></span><span class="t w20"><span class="xbox">X</span></span><span class="t w28 xt xp">(X)</span><span class="t w16 fit">10H7</span><span class="t w32 fit">10H7<br>[18.01]</span><span class="t w14 fit">10H7<br>[8.013]</span><span class="t w32 fit">10<br>[8.013]</span></div>
      <div class="irow"><span class="t w28"><svg class="i20"><use href="#d2"/></svg></span><span class="t w18"><svg class="i20"><use href="#d3"/></svg></span><i class="vsep ml6"></i><span class="t w28"><svg class="i20"><use href="#d4"/></svg></span><span class="t w16"><svg class="i20"><use href="#d5"/></svg></span><span class="t w28"><svg class="i16"><use href="#d6"/></svg></span></div>
    </div>
    <div class="glabel"><span class="gl gl-s10">尺寸快速格式化工具 - GC工具箱</span><i class="dd ml7"></i></div>
  </div>

  <div class="grp g11">
    <div class="body">
      <div class="big w41"><span class="bi"><svg class="i30"><use href="#surf"/></svg></span><span>曲面</span><i class="dd"></i></div>
    </div>
    <div class="glabel"></div>
  </div>

  <div class="grp g12">
    <div class="body pl12">
      <div class="big w44 dis"><span class="bi"><svg class="i30"><use href="#asm"/></svg></span><span>处理装配</span></div>
      <div class="big w48 addb"><span class="bi"><svg class="i26x34"><use href="#add"/></svg><i class="blueplus"></i></span><span>添加</span><i class="dd"></i></div>
      <div class="stack w62 ml1">
        <div class="si"><svg class="i16"><use href="#con"/></svg><span>装配约束</span></div>
        <div class="si"><svg class="i16"><use href="#mvc"/></svg><span>移动组件</span></div>
        <div class="si"><svg class="i16"><use href="#arr"/></svg><span>阵列组件</span></div>
      </div>
    </div>
    <div class="glabel"><span class="gl gl-s12">装配</span><i class="dd ddr"></i></div>
  </div>
</section>

<section class="selbar">
  <span class="combo c1">无选择过滤器<i class="dd"></i></span>
  <span class="combo c2">整个装配<i class="dd"></i></span>
  <span class="t w24"><svg class="i16"><use href="#s1"/></svg></span>
  <span class="t w26"><svg class="i16"><use href="#s2"/></svg></span>
  <span class="t w18"><svg class="i16"><use href="#s3"/></svg></span>
  <span class="t w16"><i class="dd"></i></span>
  <span class="t w26"><svg class="i16"><use href="#s4"/></svg></span>
  <span class="t w22"><svg class="i16"><use href="#s5"/></svg></span>
  <span class="t w26"><svg class="i16"><use href="#s6"/></svg></span>
  <span class="t w24"><svg class="i16"><use href="#s7"/></svg></span>
  <span class="t w12"><i class="dd"></i></span>
  <span class="t w28"><svg class="i16"><use href="#s8"/></svg></span>
  <span class="t w20"><svg class="i16"><use href="#s9"/></svg></span>
  <span class="t w28"><span class="on"><svg class="i16"><use href="#s10"/></svg></span></span>
  <span class="t w22"><span class="on"><svg class="i16"><use href="#s11"/></svg></span></span>
  <span class="t w24"><span class="on"><svg class="i16"><use href="#s11"/></svg></span></span>
  <span class="t w28"><svg class="i16"><use href="#s12"/></svg></span>
  <span class="t w26"><span class="on"><svg class="i16"><use href="#s13"/></svg></span></span>
  <span class="t w22"><span class="on"><svg class="i16"><use href="#s14"/></svg></span></span>
  <span class="t w28"><svg class="i16"><use href="#s15"/></svg></span>
  <span class="t w22"><span class="on"><svg class="i16"><use href="#s16"/></svg></span></span>
  <span class="t w26"><svg class="i16"><use href="#s17"/></svg></span>
  <span class="t w26"><span class="on"><svg class="i16"><use href="#plus"/></svg></span></span>
  <span class="t w24"><span class="on"><svg class="i16"><use href="#s11"/></svg></span></span>
  <span class="t w24"><svg class="i16"><use href="#s18"/></svg></span>
  <span class="t w28"><svg class="i16"><use href="#s19"/></svg></span>
  <span class="t w20"><svg class="i16"><use href="#s20"/></svg></span>
  <i class="ssep m9"></i>
  <span class="t w24"><svg class="i16"><use href="#s21"/></svg></span>
  <span class="t w24"><svg class="i16"><use href="#s22"/></svg></span>
  <span class="t w24"><svg class="i16"><use href="#s23"/></svg></span>
  <span class="t w28"><svg class="i16"><use href="#s24"/></svg></span>
  <span class="t w22"><svg class="i16"><use href="#s25"/></svg></span>
  <span class="t w29"><svg class="i16"><use href="#s26"/></svg></span>
  <span class="t w8"><i class="dd"></i></span>
  <span class="t w27"><svg class="i16"><use href="#s27"/></svg></span>
  <span class="t w11"><i class="dd"></i></span>
  <span class="t w30"><span class="on on-l"><svg class="i16"><use href="#cube"/></svg></span></span>
  <span class="t w6"><span class="on on-n"><i class="dd"></i></span></span>
  <span class="t w26"><svg class="i16"><use href="#view"/></svg></span>
  <span class="t w13"><i class="dd"></i></span>
  <i class="ssep m6"></i>
</section>

<main class="work">
  <aside class="navi">
    <div class="navhead"><span class="o5">器</span><span class="maxi"></span></div>
    <div class="tree">
      <div class="row head"><span>-</span><span>最新</span><span class="clip">附</span></div>
      <div class="row"><span><span class="o7">型视图</span></span><span></span><span></span></div>
      <div class="row alt"><span><span class="o2">摄像机</span></span><span></span><span></span></div>
      <div class="row"><span><span class="o6">户表达式</span></span><span></span><span></span></div>
      <div class="row alt"><span><span class="o7">型历史记录</span></span><span></span><span></span></div>
      <div class="row"><span class="nm"><svg class="i16 cutl"><use href="#datum"/></svg>基准坐标系 (0)</span><span><svg class="i14"><use href="#chk"/></svg></span><span></span></div>
      <div class="row alt"><span class="nm"><svg class="i16 cutl"><use href="#ext"/></svg>拉伸 (1)</span><span><svg class="i14"><use href="#chk"/></svg></span><span></span></div>
      <div class="row"><span class="nm"><svg class="i16 cutl"><use href="#ext"/></svg>拉伸 (2)</span><span><svg class="i14"><use href="#chk"/></svg></span><span></span></div>
      <div class="row alt"><span class="nm bold"><svg class="i16 cutl"><use href="#ext"/></svg>拉伸 (3)</span><span><svg class="i14"><use href="#chk"/></svg></span><span></span></div>
      <div class="filler"></div>
      <div class="hscroll"><i></i></div>
    </div>
    <div class="panelbar"></div>
    <div class="acc"><svg class="chev"><use href="#chev"/></svg></div>
    <div class="acc"><svg class="chev"><use href="#chev"/></svg></div>
    <div class="acc"><svg class="chev"><use href="#chev"/></svg></div>
  </aside>

  <div class="gfx">
    <div class="docstrip">
      <span class="doctab"><svg class="i16"><use href="#ftab"/></svg><span class="dn">_model1.prt</span><svg class="i12"><use href="#fpg"/></svg><svg class="i10b"><use href="#fx"/></svg></span>
    </div>
    <div class="canvas">
      <svg class="scene" viewBox="269 204 1459 806" width="1459" height="806">
        <defs>
          <linearGradient id="cyl" gradientUnits="userSpaceOnUse" x1="776" y1="0" x2="1083" y2="0">
            <stop offset="0" stop-color="#b87300"/><stop offset=".2" stop-color="#b06d00"/><stop offset=".3" stop-color="#a66300"/><stop offset=".35" stop-color="#b06c00"/><stop offset=".52" stop-color="#af6a00"/><stop offset=".74" stop-color="#b26d00"/><stop offset=".9" stop-color="#c57800"/><stop offset="1" stop-color="#cc7c00"/>
          </linearGradient>
        </defs>
        <polygon points="438.6,524.6 425.4,635.9 1077.8,891.5 1091,778" fill="#a96500" stroke="#3a2800" stroke-width="1"/>
        <polygon points="1091,778 1077.8,891.5 1400.6,693.2 1412.8,580.8" fill="#c87b00" stroke="#3a2800" stroke-width="1"/>
        <polygon points="438.6,524.6 761.5,326.2 1412.8,580.8 1091,778" fill="#fbc30a" stroke="#3a2800" stroke-width="1"/>
        <path d="M802 329 L776 556 A141 63 6.7 0 0 1057 582 L1083 354 Z" fill="url(#cyl)"/>
        <path d="M776 556 A141 63 6.7 0 0 1057 582" fill="none" stroke="#2a1c00" stroke-width=".8"/>
        <ellipse cx="942.8" cy="341.3" rx="141.3" ry="63.6" transform="rotate(6.7 942.8 341.3)" fill="#fbc30a" stroke="#3a2800" stroke-width=".8"/>
        <g transform="translate(860 530) scale(.3333)" fill="none" stroke="#f8e0a8" stroke-width="3">
          <path d="M170 280L185 120M170 280L277 213L258 390M170 280L335 345L320 522L148 458L170 280M148 458L258 390L420 460L320 522L500 590M258 390L345 338"/>
          <path d="M176 150l8-50 8 50z" fill="#9a9a9a" stroke="none"/>
          <path d="M332 345l34-18-28 24z" fill="#eee" stroke="none"/>
          <circle cx="338" cy="342" r="8" fill="#888" stroke="none"/>
          <path d="M436 570l42 14-44-2z" fill="#f4f4f4" stroke="none"/>
          <text x="180" y="102" class="wcs">Z</text>
          <text x="365" y="326" class="wcs">Y</text>
          <text x="490" y="602" class="wcs">X</text>
        </g>
        <g>
          <path d="M332 945L352 913L372 922L368 944L350 958Z" fill="#d6d6d6" fill-opacity=".6" stroke="#b4b4b4"/>
          <path d="M350 913L372 922L352 936L332 926Z" fill="#e4e4e4" fill-opacity=".5" stroke="#b4b4b4"/>
          <path d="M352 936L350 958" stroke="#b4b4b4"/>
          <path d="M333 943L355 927" stroke="#b9d3b9" stroke-width="3"/>
          <path d="M333 942L337 908" stroke="#1c3c98" stroke-width="3"/>
          <path d="M334 912l3-8 3 8z" fill="#1c3c98"/>
          <path d="M335 943L362 954" stroke="#c24a4a" stroke-width="3"/>
          <path d="M358 949l11 7-13 0z" fill="#c24a4a"/>
          <circle cx="333" cy="943" r="4" fill="#cfcfcf" stroke="#aaa"/>
          <text x="334" y="903" class="tz">Z</text>
          <text x="370" y="963" class="tx">X</text>
        </g>
      </svg>
    </div>
  </div>
</main>

<footer class="status"><span>B3，或者双击某一对象</span></footer>

<div class="taskbar">
  <svg class="logo" viewBox="0 0 24 24"><path d="M0 0h11.4v11.4H0zM12.6 0H24v11.4H12.6zM0 12.6h11.4V24H0zM12.6 12.6H24V24H12.6z" fill="url(#gLogo)"/></svg>
  <svg class="tbi s1" viewBox="0 0 24 24"><circle cx="14" cy="10" r="7.5" fill="none" stroke="#222" stroke-width="2.4"/><path d="M8.500 15.500L3 21" stroke="#222" stroke-width="3" stroke-linecap="round"/></svg>
  <svg class="tbi s2" viewBox="0 0 24 24"><rect x="9" y="1" width="14" height="14" rx="1" fill="#f4f6fa"/><rect x="5" y="5" width="14" height="14" fill="#c9ccd0"/><rect x="1" y="9" width="14" height="14" rx="1" fill="#2b2b2b"/></svg>
  <svg class="tbi s3" viewBox="0 0 24 24"><path d="M1 4c0-1 .5-2 2-2h5l2 3h11c1 0 2 1 2 2v14c0 1-1 2-2 2H3c-1 0-2-1-2-2z" fill="#f5c84a"/><path d="M1 8h22v13c0 1-1 2-2 2H3c-1 0-2-1-2-2z" fill="#fbdc76"/><rect x="6" y="15" width="13" height="8" rx="1" fill="#1b78b8"/></svg>
  <svg class="tbi s4" viewBox="0 0 24 24"><circle cx="12" cy="12" r="9.500" fill="#7cc84c" stroke="#d6efc0" stroke-width="1.500"/><path d="M2 18C6 10 14 3 22 2c-2 1-3 2-4 3" fill="none" stroke="#7cc84c" stroke-width="1.500"/><text x="12" y="18" class="ie">e</text></svg>
  <svg class="tbi s5" viewBox="0 0 24 24"><circle cx="12" cy="12" r="11" fill="#5eb35a" stroke="#3f8c3f"/><ellipse cx="12" cy="16.500" rx="3" ry="3.500" fill="#1f3a1f"/><path d="M5 8l4 2-4 2M19 8l-4 2 4 2" fill="none" stroke="#1f3a1f" stroke-width="1.500"/></svg>
  <span class="hov">
    <svg class="tbi s6" viewBox="0 0 24 24"><circle cx="11" cy="14" r="9" fill="#2a86cf"/><path d="M2 15c5 6 14 6 20-3 1-4-1-7-3-8 1 5-2 9-7 11-4 2-7 1-10 0z" fill="#e6b23c"/><path d="M3 1l14 1-4 13z" fill="#d2354f"/><path d="M3 1l7 3 3 11z" fill="#98263a"/></svg>
    <i class="bar"></i>
  </span>
  <i class="dot"></i>
  <div class="tray">
    <span class="cpu">44℃<br>CPU</span>
    <svg class="tri chevup" viewBox="0 0 14 8"><path d="M1 7l6-6 6 6" fill="none" stroke="#222" stroke-width="1.300"/></svg>
    <svg class="tri mic" viewBox="0 0 16 22"><rect x="5" y="1" width="6" height="12" rx="3" fill="none" stroke="#2a6fb8" stroke-width="1.300"/><path d="M2 9c0 8 12 8 12 0M8 16v4M4 21h8" fill="none" stroke="#2a6fb8" stroke-width="1.300"/></svg>
    <span class="zh">中</span>
    <svg class="tri gauge" viewBox="0 0 18 18"><rect x="1" y="1" width="16" height="16" fill="#f8f8f8" stroke="#c4c8cc"/><path d="M9 10l6-7M1 10l7 7" stroke="#555"/><circle cx="9" cy="10" r="1.500" fill="#333"/></svg>
    <svg class="tri net" viewBox="0 0 18 18"><path d="M12 2H1v10h13V9M7 12v4M3 16h8" fill="none" stroke="#222" stroke-width="1.100"/><rect x="13" y="1" width="4" height="7" rx="1.500" fill="none" stroke="#222" stroke-width="1.100"/></svg>
    <svg class="tri spk" viewBox="0 0 18 14"><path d="M1 5h3l4-4v12L4 9H1z" fill="none" stroke="#222"/><path d="M11 4c1 2 1 4 0 6M13 2c2 3 2 7 0 10M15.500 1c2 4 2 8 0 12" fill="none" stroke="#222"/></svg>
    <span class="clk">2</span>
  </div>
</div>

<div class="menu">
  <div class="mi"><svg class="i16"><use href="#cube"/></svg><span>带边着色</span></div>
  <div class="mi"><svg class="i16"><use href="#cube2"/></svg><span>着色</span></div>
  <div class="mi"><svg class="i16"><use href="#wire"/></svg><span>带有淡化边的线框</span></div>
  <div class="mi"><svg class="i16"><use href="#wire"/></svg><span>带有隐藏边的线框</span></div>
  <div class="mi sel"><svg class="i16"><use href="#wire2"/></svg><span>静态线框</span></div>
  <div class="mi"><svg class="i16"><use href="#ball"/></svg><span>艺术外观</span></div>
  <div class="mi"><svg class="i16"><use href="#stripes"/></svg><span>面分析</span></div>
  <div class="mi"><svg class="i16"><use href="#partial"/></svg><span>局部着色</span></div>
</div>
<svg class="cursor" viewBox="0 0 13 19"><path d="M1 1v14l3.500-3 2.500 6 3-1.300-2.500-5.700H12z" fill="#fff" stroke="#222" stroke-width="1"/></svg>

<div class="wm"><span>左键</span></div>
<div class="toast">
  <svg class="toast-i" viewBox="0 0 18 18"><rect x="1" y="1" width="16" height="16" fill="#f4f6fa" stroke="#bcc4d0"/><path d="M1 17V9l8 8z" fill="#2a6fc8"/><path d="M9 10l6-7" stroke="#555"/><circle cx="9" cy="10" r="1.500" fill="#333"/></svg>
  <i class="toast-b"></i>
</div>
</body>
</html>
```

FILE: styles.css
```css
* { box-sizing: border-box; }
html, body { margin: 0; padding: 0; }
body {
  width: 1728px; height: 1080px; overflow: hidden; position: relative;
  background: #fff; color: #333;
  font: 11px/14px "Noto Sans CJK SC", "Liberation Sans", sans-serif;
  display: flex; flex-direction: column;
}
.defs { position: absolute; }
i { display: block; font-style: normal; }
svg { display: block; flex: none; }
.grow { flex: 1; }

.i10 { width: 10px; height: 10px; } .i10b { width: 10px; height: 10px; margin-left: 5px; }
.i12 { width: 12px; height: 12px; margin-left: 5px; } .i12b { width: 14px; height: 10px; }
.i14 { width: 14px; height: 14px; } .i16 { width: 16px; height: 16px; }
.i18 { width: 18px; height: 18px; } .i20 { width: 20px; height: 20px; }
.i22 { width: 22px; height: 22px; } .i30 { width: 30px; height: 30px; }
.i32 { width: 32px; height: 32px; }
.i25x30 { width: 25px; height: 30px; } .i26x34 { width: 26px; height: 34px; }

.t { display: flex; align-items: center; justify-content: center; flex: none; }
.w6{width:6px}.w8{width:8px}.w10{width:10px}.w11{width:11px}.w12{width:12px}.w13{width:13px}.w14{width:14px}.w16{width:16px}.w18{width:18px}.w20{width:20px}.w22{width:22px}.w24{width:24px}.w25{width:25px}.w26{width:26px}.w27{width:27px}.w28{width:28px}.w29{width:29px}.w30{width:30px}.w32{width:32px}.w34{width:34px}.w37{width:37px}.w38{width:38px}.w41{width:41px}.w44{width:44px}.w45{width:45px}.w48{width:48px}.w60{width:60px}.w62{width:62px}.w66{width:66px}.w68{width:68px}
.ml1{margin-left:1px}.ml2{margin-left:2px}.ml3{margin-left:3px}.ml4{margin-left:4px}.ml5{margin-left:5px}.ml6{margin-left:6px}.ml7{margin-left:7px}.ml8{margin-left:8px}.ml9{margin-left:9px}.ml10{margin-left:10px}.ml12{margin-left:12px}
.pl3{padding-left:3px}.pl4{padding-left:4px}.pl10{padding-left:10px}.pl12{padding-left:12px}
.o2{margin-left:-2px}.o5{margin-left:-5px}.o6{margin-left:-6px}.o7{margin-left:-7px}

.dd { width: 0; height: 0; border: 3px solid transparent; border-top: 4px solid #222; border-bottom: 0; flex: none; }
.up { width: 0; height: 0; border: 3px solid transparent; border-bottom: 4px solid #ccc; border-top: 0; }
.caret { width: 7px; height: 6px; border-top: 1px solid #333; position: relative; }
.caret::after { content: ""; display: block; margin: 2px auto 0; width: 0; height: 0; border: 3px solid transparent; border-top: 3px solid #333; border-bottom: 0; }

/* title bar */
.titlebar { height: 27px; display: flex; align-items: center; flex: none; background: #fff; padding-bottom: 2px; }
.titlebar .t { height: 24px; }
.tsep { width: 1px; height: 20px; background: #d8d8d8; flex: none; }
.tt { color: #222; flex: none; }
.apptitle { margin-left: 638px; font: 13px/18px "Liberation Sans", "Noto Sans CJK SC", sans-serif; color: #222; white-space: nowrap; }
.siemens { width: 57px; overflow: hidden; white-space: nowrap; font: bold 13px/16px "Liberation Sans", sans-serif; letter-spacing: .6px; color: #1b8f96; }

/* tab row */
.tabs { height: 27px; flex: none; background: #d9d9d9; display: flex; align-items: stretch; }
.tab { padding: 0 13px; font-size: 13px; line-height: 26px; color: #333; flex: none; }
.tab.active { background: #fff; color: #1f8fa0; padding-left: 0; }
.search { width: 117px; height: 20px; margin-top: 3px; border: 1px solid #a9a9a9; background: #fff; display: flex; align-items: center; justify-content: space-between; padding-left: 2px; color: #a5a5a5; }
.magi { margin-right: -1px; }

/* ribbon */
.ribbon { height: 93px; flex: none; background: #fff; border-bottom: 1px solid #dcdcdc; display: flex; padding-top: 4px; align-items: flex-start; }
.grp { height: 86.5px; flex: none; display: flex; flex-direction: column; border-right: 1px solid #e0e0e0; }
.g1{width:82px}.g2{width:370px}.g3{width:170px}.g4{width:104px}.g5{width:52px}.g6{width:58px}.g7{width:52px}.g8{width:98px}.g9{width:30px}.g10{width:288px}.g11{width:42px}.g12{width:181px}
.body { height: 72px; display: flex; flex: none; }
.body.col { flex-direction: column; padding-top: 5px; gap: 6px; }
.glabel { height: 13px; margin-top: 1.5px; display: flex; align-items: center; white-space: nowrap; }
.gl { color: #1f7d90; line-height: 13px; font-size: 11px; }
.gl-mid { margin-left: 165px; } .ddr { margin-left: auto; margin-right: 9px; }
.gl-s3 { margin-left: 54px; }
.gl-s10 { margin-left: 55px; }
.gl-s12 { margin-left: 70px; }
.glabel .dd { border-top-color: #333; }
.g1 .glabel .dd { margin-right: 9px; }
.g4 .gl, .g5 .gl, .g7 .gl { margin-left: 1px; }
.g4 .glabel .dd { margin-left: 15px; }
.g5 .glabel .dd { margin-left: 5px; }

.skbox { width: 60px; height: 66px; margin-top: 1px; border: 1px solid #dcdcdc; border-left: 0; display: grid; grid-template-columns: 26px 32px; grid-auto-rows: 32px; }
.sk { display: flex; align-items: center; justify-content: center; }
.skscroll { width: 16px; margin-left: 1px; margin-top: 8px; height: 52px; display: flex; flex-direction: column; justify-content: space-between; align-items: center; }

.big { display: flex; flex-direction: column; align-items: center; flex: none; white-space: nowrap; }
.bi { height: 37px; display: flex; align-items: center; justify-content: center; position: relative; width: 100%; flex: none; }
.big > span:not(.bi) { line-height: 16px; color: #333; }
.big > .dd { margin-top: 4px; }
.boxed { height: 34px; margin-bottom: 3px; border: 1px solid #e2e2e2; border-radius: 3px; }
.dis > span:not(.bi) { color: #bdbdbd !important; }
.blueplus { position: absolute; right: 0; top: 3px; width: 11px; height: 11px; background: linear-gradient(#4a7fc0,#4a7fc0) center/100% 3px no-repeat, linear-gradient(#4a7fc0,#4a7fc0) center/3px 100% no-repeat; }
.addb .i26x34 { margin-right: 14px; margin-top: 2px; }

.stack { display: flex; flex-direction: column; gap: 6px; flex: none; }
.si { height: 16px; display: flex; align-items: center; gap: 5px; white-space: nowrap; color: #333; }

.irow { height: 24px; display: flex; align-items: center; flex: none; }
.vsep { width: 1px; height: 24px; background: #e4e4e4; flex: none; }
.twoline { flex-direction: column; }
.twoline b { font: bold 7px/8px "Liberation Sans", sans-serif; color: #555; }
.tol { flex-direction: column; }
.tol b { font: bold 7px/8px "Liberation Sans", sans-serif; color: #666; }
.xt { font: 13px/16px "Liberation Sans", sans-serif; color: #333; }
.xp { font-size: 15px; }
.xbox { display: block; width: 16px; height: 16px; border: 1px solid #6a4a4a; text-align: center; font: 13px/14px "Liberation Sans", sans-serif; color: #333; }
.fit { display: block; font: bold 6px/7px "Liberation Sans", sans-serif; color: #555; text-align: center; white-space: nowrap; letter-spacing: -.2px; }
.fit.w14 { width: 14px; margin: 0 2px; } 
.fit.w32 { width: 18px; margin: 0 7px; }

/* selection bar */
.selbar { height: 33px; flex: none; background: #fff; border-bottom: 1px solid #a8a8a8; display: flex; align-items: center; padding-left: 3px; padding-top: 2px; }
.selbar .t { height: 22px; }
.combo { height: 20px; border: 1px solid #a9a9a9; display: flex; align-items: center; justify-content: space-between; padding: 0 6px 0 1px; color: #333; flex: none; background: #fff; }
.combo .dd { border-width: 4px; border-top-width: 5px; border-bottom-width: 0; }
.c1 { width: 133px; margin-right: 9px; } .c2 { width: 140px; margin-right: 4px; }
.on { display: flex; width: 23px; height: 22px; align-items: center; justify-content: center; background: #cfe3ea; flex: none; }
.on-l { width: 24px; margin-left: -6px; }
.on-n { width: 9px; background: #d5e5ec; }
.ssep { width: 1px; height: 22px; background: #d4d4d4; flex: none; }
.m9 { margin: 0 9px; } .m6 { margin-left: 6px; }

/* work area */
.work { flex: 1; min-height: 0; display: flex; }
.navi { width: 269px; flex: none; border-right: 1px solid #8c8c8c; display: flex; flex-direction: column; background: #fff; overflow: hidden; }
.navhead { height: 28px; padding-right: 17px; display: flex; align-items: center; justify-content: space-between; flex: none; font-size: 12px; }
.maxi { width: 12px; height: 10px; border: 1px solid #222; border-top-width: 3px; margin-top: 4px; }
.tree { width: 257px; height: 719px; flex: none; border-right: 1px solid #d8d8d8; border-top: 1px solid #dcdcdc; display: flex; flex-direction: column; }
.row { height: 20px; flex: none; display: grid; grid-template-columns: 143px 101px 12px; align-items: center; border-bottom: 1px solid #f0f0f0; background: #fff; white-space: nowrap; font-size: 12px; }
.row > span { height: 100%; display: flex; align-items: center; border-right: 1px solid #e8e8e8; overflow: hidden; }
.row > span:nth-child(2) { padding-left: 7px; }
.row > span:last-child { border-right: 0; }
.row.alt { background: #fbfbfb; }
.row.head { height: 21px; background: #f0eff1; border-bottom: 1px solid #d8d8d8; }
.row.head > span { border-right-color: #d0d0d0; }
.clip { padding-left: 6px; }
.nm { gap: 4px; font-family: "Liberation Sans", "Noto Sans CJK SC", sans-serif; white-space: pre; }
.cutl { margin-left: -3px; }
.bold { font-weight: 700; color: #222; }
.filler { flex: 1; background:
  linear-gradient(#e8e8e8,#e8e8e8) 143px 0/1px 100% no-repeat,
  linear-gradient(#e8e8e8,#e8e8e8) 244px 0/1px 100% no-repeat,
  repeating-linear-gradient(#fff 0 19px,#f0f0f0 19px 20px,#fbfbfb 20px 39px,#f0f0f0 39px 40px); }
.hscroll { height: 19px; flex: none; background: #f0eff1; display: flex; align-items: center; }
.hscroll i { width: 177px; height: 2px; background: #858585; }
.panelbar { width: 257px; height: 4px; background: #b0b0b0; flex: none; margin-bottom: 1px; }
.acc { width: 257px; height: 24px; flex: none; border-bottom: 2px solid #d4d4d4; display: flex; align-items: center; justify-content: flex-end; padding-right: 6px; padding-top: 1px; }
.chev { width: 11px; height: 9px; }

.gfx { flex: 1; min-width: 0; display: flex; flex-direction: column; }
.docstrip { height: 24px; flex: none; background: #fff; border-bottom: 2px solid #6ea3b6; }
.doctab { width: 132px; height: 23px; background: #4f9bb8; color: #eaf4f7; display: flex; align-items: center; padding-left: 6px; overflow: hidden; }
.doctab .i16 { width: 14px; height: 14px; }
.dn { margin-left: 5px; font: 13px/16px "Open Sans", "Liberation Sans", sans-serif; white-space: nowrap; width: 69px; flex: none; }
.canvas { flex: 1; min-height: 0; background: linear-gradient(#b5b6ba 0%, #cfd0d3 45%, #e6e7ea 100%); }
.scene { width: 1459px; height: 806px; }
.wcs { font: 36px "Liberation Sans", sans-serif; fill: #f8e0a8; stroke: none; }
.tz { font: 11px "Liberation Sans", sans-serif; fill: #2a4aa8; }
.tx { font: 11px "Liberation Sans", sans-serif; fill: #c24a4a; }

/* status + taskbar */
.status { height: 23px; flex: none; border-top: 1px solid #9c9c9c; background: #fff; display: flex; align-items: center; color: #222; font-size: 11px; padding-bottom: 3px; }
.taskbar { height: 47px; flex: none; display: flex; align-items: center; position: relative; padding-left: 721px; border-top: 1px solid #dfe3ea; background: linear-gradient(90deg, #e6eefb 0%, #d6e1f9 25%, #dae3f6 50%, #dfe8f7 75%, #e4edf8 100%); }
.logo { width: 23px; height: 23px; }
.tbi { width: 22px; height: 22px; }
.s1 { margin-left: 22px; } .s2 { margin-left: 21px; } .s3 { margin-left: 21px; width: 25px; } .s4 { margin-left: 19px; width: 24px; height: 24px; } .s5 { margin-left: 20px; width: 24px; height: 24px; }
.ie { font: italic bold 17px "Liberation Sans", sans-serif; fill: #fff; text-anchor: middle; }
.hov { width: 38px; height: 38px; margin-left: 13px; background: #edf1fa; border-radius: 4px; position: relative; display: flex; align-items: center; justify-content: center; }
.s6 { margin: 0; width: 24px; height: 24px; }
.bar { position: absolute; left: 11px; bottom: 0; width: 16px; height: 3px; border-radius: 2px; background: #1f6fbe; }
.dot { position: absolute; left: 950px; top: 38px; width: 5px; height: 3px; border-radius: 2px; background: #8a8f98; }
.tray { position: absolute; left: 1497px; top: 0; right: 0; height: 47px; display: flex; align-items: center; }
.cpu { width: 28px; font: 12px/16px "Liberation Sans", "Noto Sans CJK SC", sans-serif; text-align: center; color: #222; flex: none; white-space: nowrap; }
.tri { flex: none; }
.chevup { width: 13px; height: 7px; margin-left: 9px; }
.mic { width: 14px; height: 18px; margin-left: 15px; }
.zh { width: 14px; margin-left: 18px; font-size: 13px; color: #333; flex: none; }
.gauge { width: 17px; height: 17px; margin-left: 20px; }
.net { width: 16px; height: 17px; margin-left: 21px; }
.spk { width: 16px; height: 13px; margin-left: 7px; }
.clk { margin-left: 15px; font: 12px "Liberation Sans", sans-serif; margin-top: 16px; }

/* overlays */
.menu { position: absolute; left: 1100px; top: 176px; width: 146px; height: 196px; background: #fff; border: 1px solid #cfcfcf; padding: 0 2px; box-shadow: 2px 2px 3px rgba(0,0,0,.55); z-index: 5; }
.mi { height: 24px; padding-left: 5px; display: flex; align-items: center; gap: 7px; color: #444; white-space: nowrap; }
.mi.sel { background: #afd2dd; height: 22px; margin: 1px 0; }
.cursor { position: absolute; left: 1161px; top: 284px; width: 13px; height: 19px; z-index: 6; }
.wm { position: absolute; left: 1624px; top: 997px; width: 82px; height: 35px; overflow: hidden; background: rgba(85,85,85,.72); border-radius: 4px 4px 0 0; color: #d8d8d8; font: 31px/44px "Noto Sans CJK SC", serif; padding-left: 8px; letter-spacing: 1px; white-space: nowrap; z-index: 3; }
.toast { position: absolute; left: 1693px; top: 1009px; width: 35px; height: 24px; background: #fff; border: 1px solid #e4e4e4; border-right: 0; display: flex; align-items: center; padding-left: 6px; z-index: 4; }
.toast-i { width: 16px; height: 16px; }
.toast-b { width: 3px; height: 8px; background: #a8c0dc; margin-left: 11px; }
```
